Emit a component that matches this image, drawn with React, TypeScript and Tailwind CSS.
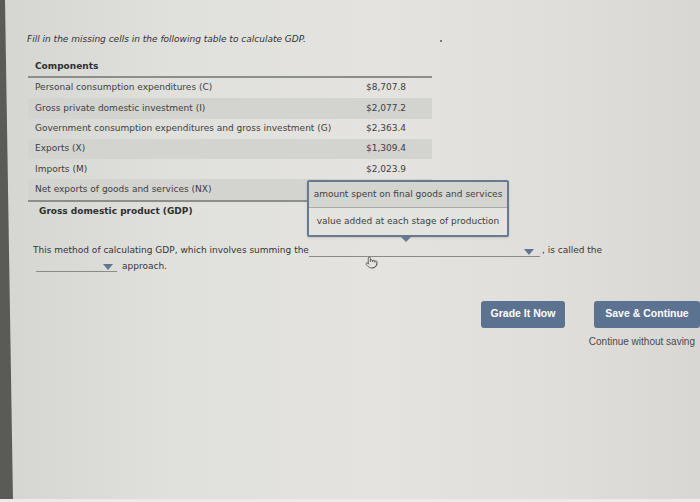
import React from "react";
import { Pointer } from "lucide-react";

const font = { fontFamily: '"DejaVu Sans", Verdana, sans-serif' };

const rows: { label: string; value: string; shaded: boolean }[] = [
  { label: "Personal consumption expenditures (C)", value: "$8,707.8", shaded: false },
  { label: "Gross private domestic investment (I)", value: "$2,077.2", shaded: true },
  { label: "Government consumption expenditures and gross investment (G)", value: "$2,363.4", shaded: false },
  { label: "Exports (X)", value: "$1,309.4", shaded: true },
  { label: "Imports (M)", value: "$2,023.9", shaded: false },
  { label: "Net exports of goods and services (NX)", value: "", shaded: true },
];

function Caret({ className }: { className: string }) {
  return (
    <svg className={className} width="10" height="6" viewBox="0 0 10 6">
      <polygon points="0,0 10,0 5,6" fill="#5f7590" />
    </svg>
  );
}

export default function App() {
  return (
    <div
      className="relative w-[700px] h-[502px] overflow-hidden bg-[linear-gradient(90deg,#d5d5d2_0%,#e0e0dd_25%,#e4e3e0_55%,#e0dedb_80%,#d9d7d4_100%)] text-[#3c3c3c]"
      style={font}
    >
      {/* dark screen bezel edge */}
      <div className="absolute left-0 top-0 h-full w-[13px] bg-[#5a5a57] [clip-path:polygon(0_0,5px_0,13px_100%,0_100%)]" />
      <div className="absolute left-0 bottom-0 w-full h-[3px] bg-[#ecebe9]" />

      <div className="pl-[27px] pt-[33px]">
        <div className="flex items-center w-[415px] justify-between">
          <p className="italic text-[9px] leading-[12px] text-[#333]">
            Fill in the missing cells in the following table to calculate GDP.
          </p>
          <span className="w-[2px] h-[2px] rounded-full bg-[#555] mt-[4px]" />
        </div>

        {/* table */}
        <div className="mt-[12px] ml-[1px] w-[404px] text-[9px]">
          <div className="h-[19px] flex items-center pl-[7px] font-bold text-[#2f2f2f]">Components</div>
          <div className="h-[2px] bg-[#8d8d8b]" />
          {rows.map((r) => (
            <div
              key={r.label}
              className={`h-[20.3px] grid grid-cols-[338px_1fr] items-center ${r.shaded ? "bg-[#d3d3d0]" : ""}`}
            >
              <span className="pl-[7px] whitespace-nowrap text-[#404040]">{r.label}</span>
              <span className="text-[#404040]">{r.value}</span>
            </div>
          ))}
          <div className="h-[2px] bg-[#8d8d8b]" />
          <div className="h-[19px] flex items-center pl-[11px] font-bold text-[#2f2f2f]">
            Gross domestic product (GDP)
          </div>
        </div>

        {/* sentence */}
        <div className="mt-[23px] ml-[6px] text-[9px] text-[#353535]">
          <div className="flex items-end">
            <span className="leading-[12px]">This method of calculating GDP, which involves summing the</span>
            <span className="relative top-[-4px] w-[231px] h-[14px] border-b border-[#8a8a8a] mb-[-5px]">
              <Caret className="absolute right-[6px] top-[6px]" />
            </span>
            <span className="ml-[2px] leading-[12px]">, is called the</span>
          </div>
          <div className="flex items-end mt-[4px] ml-[3px]">
            <span className="relative top-[-4px] w-[81px] h-[13px] border-b border-[#8a8a8a] mb-[-4px]">
              <Caret className="absolute right-[4px] top-[5px]" />
            </span>
            <span className="ml-[5px] leading-[12px]">approach.</span>
          </div>
        </div>

        {/* buttons */}
        <div className="flex justify-end mt-[29px] mr-[1px] gap-[29px]" style={{ fontFamily: '"Liberation Sans", Arial, sans-serif' }}>
          <button className="w-[84px] h-[27px] rounded-[3px] bg-[#5b7290] text-white font-bold text-[10.5px]">
            Grade It Now
          </button>
          <button className="w-[106px] h-[27px] rounded-[3px] bg-[#5b7290] text-white font-bold text-[10.5px] mr-[-1px]">
            Save &amp; Continue
          </button>
        </div>
        <div className="flex justify-end mt-[6px]" style={{ fontFamily: '"Liberation Sans", Arial, sans-serif' }}>
          <span className="text-[10px] text-[#4a4a4a] whitespace-nowrap mr-[5px]">Continue without saving</span>
        </div>
      </div>

      {/* dropdown menu */}
      <div className="absolute left-[307px] top-[180px] w-[202px] border-2 border-[#687a8f] rounded-[2px] bg-[#e3e3e0] text-[9px] text-[#3f3f3f] shadow-sm">
        <div className="h-[26px] flex items-center justify-center bg-[#d4d4d1] border-b border-[#a9a9a7] whitespace-nowrap">
          amount spent on final goods and services
        </div>
        <div className="h-[27px] flex items-center justify-center whitespace-nowrap">
          value added at each stage of production
        </div>
        <svg className="absolute left-[90px] top-full" width="14" height="7" viewBox="0 0 14 7">
          <polygon points="0,0 14,0 7,7" fill="#687a8f" />
        </svg>
      </div>

      {/* cursor */}
      <div className="absolute left-[365px] top-[256px] text-[#555]">
        <Pointer size={13} strokeWidth={1.6} />
      </div>
    </div>
  );
}
